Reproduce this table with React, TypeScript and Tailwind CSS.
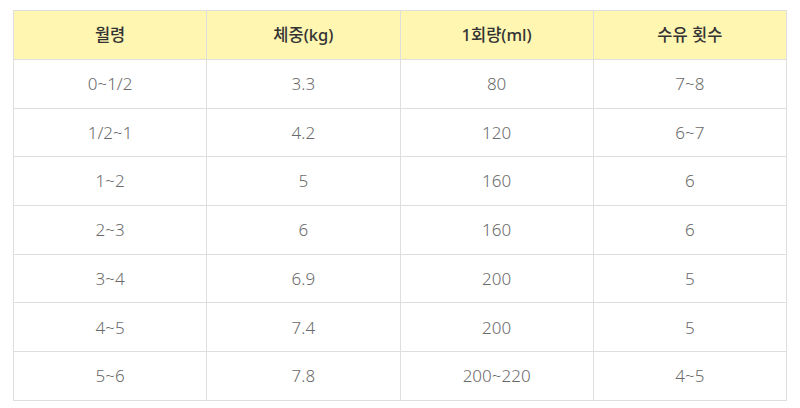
const rows = [
  ['0~1/2', '3.3', '80', '7~8'],
  ['1/2~1', '4.2', '120', '6~7'],
  ['1~2', '5', '160', '6'],
  ['2~3', '6', '160', '6'],
  ['3~4', '6.9', '200', '5'],
  ['4~5', '7.4', '200', '5'],
  ['5~6', '7.8', '200~220', '4~5'],
]

const headers = ['월령', '체중(kg)', '1회량(ml)', '수유 횟수']

export default function App() {
  return (
    <div
      className="h-[408px] w-[800px] bg-white pl-[13px] pt-[10px]"
      style={{ fontFamily: '"Noto Sans", "Noto Sans CJK KR", sans-serif' }}
    >
      <table className="w-[774px] table-fixed border-collapse text-[17px]">
        <thead>
          <tr className="h-[49px] bg-[#fff6b2]">
            {headers.map((h) => (
              <th key={h} className="border border-[#dedede] text-center text-[16.5px] font-medium text-[#333]">
                {h}
              </th>
            ))}
          </tr>
        </thead>
        <tbody>
          {rows.map((r) => (
            <tr key={r[0]} className="h-[48.7px]">
              {r.map((c, i) => (
                <td key={i} className="border border-[#dedede] text-center font-light text-[#6a6a6a]">
                  {c}
                </td>
              ))}
            </tr>
          ))}
        </tbody>
      </table>
    </div>
  )
}
